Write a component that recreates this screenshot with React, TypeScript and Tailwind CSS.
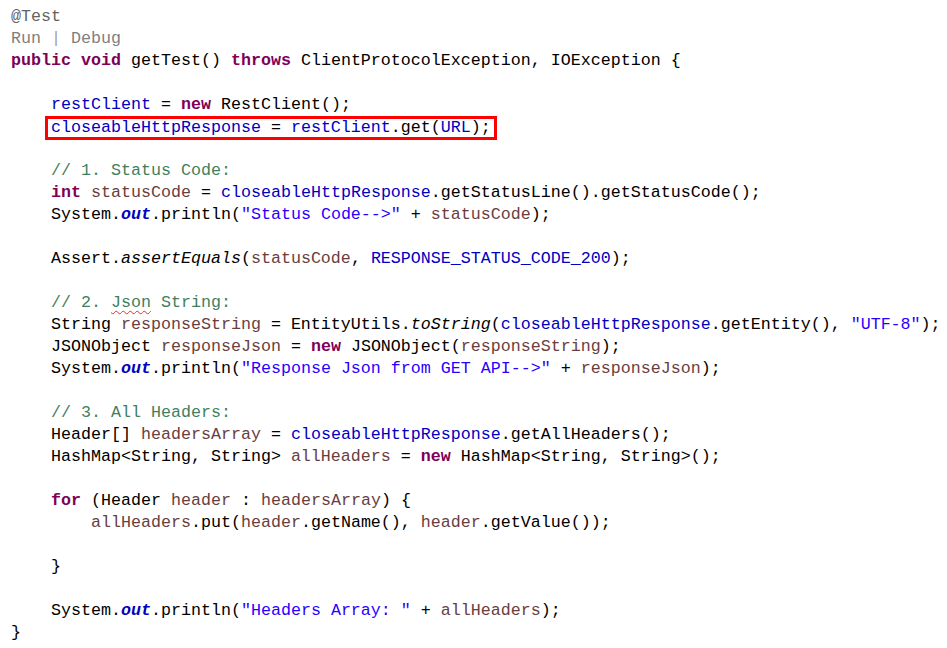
type Tok = [string, string?];

const K = 'font-bold text-[#7f0055]';
const F = 'text-[#0000c0]';
const S = 'text-[#2a00ff]';
const C = 'text-[#3f7f5f]';
const V = 'text-[#6a3e3e]';
const SF = 'font-bold italic text-[#0000c0]';
const SM = 'italic';

const lines: Tok[][] = [
  [['@Test', 'text-[#646464]']],
  [['Run', 'text-[#808080]'], [' | ', 'text-[#a0a0a0]'], ['Debug', 'text-[#808080]']],
  [['public', K], [' '], ['void', K], [' getTest() '], ['throws', K], [' ClientProtocolException, IOException {']],
  [],
  [['    '], ['restClient', F], [' = '], ['new', K], [' RestClient();']],
  [['    '], ['closeableHttpResponse', F], [' = '], ['restClient', F], ['.get('], ['URL', F], [');']],
  [],
  [['    '], ['// 1. Status Code:', C]],
  [['    '], ['int', K], [' '], ['statusCode', V], [' = '], ['closeableHttpResponse', F], ['.getStatusLine().getStatusCode();']],
  [['    System.'], ['out', SF], ['.println('], ['"Status Code-->"', S], [' + '], ['statusCode', V], [');']],
  [],
  [['    Assert.'], ['assertEquals', SM], ['('], ['statusCode', V], [', '], ['RESPONSE_STATUS_CODE_200', F], [');']],
  [],
  [['    '], ['// 2. ', C], ['Json', C + ' underline decoration-wavy decoration-[#e03030] decoration-1 underline-offset-[3px]'], [' String:', C]],
  [['    String '], ['responseString', V], [' = EntityUtils.'], ['toString', SM], ['('], ['closeableHttpResponse', F], ['.getEntity(), '], ['"UTF-8"', S], [');']],
  [['    JSONObject '], ['responseJson', V], [' = '], ['new', K], [' JSONObject('], ['responseString', V], [');']],
  [['    System.'], ['out', SF], ['.println('], ['"Response Json from GET API-->"', S], [' + '], ['responseJson', V], [');']],
  [],
  [['    '], ['// 3. All Headers:', C]],
  [['    Header[] '], ['headersArray', V], [' = '], ['closeableHttpResponse', F], ['.getAllHeaders();']],
  [['    HashMap<String, String> '], ['allHeaders', V], [' = '], ['new', K], [' HashMap<String, String>();']],
  [],
  [['    '], ['for', K], [' (Header '], ['header', V], [' : '], ['headersArray', V], [') {']],
  [['        '], ['allHeaders', V], ['.put('], ['header', V], ['.getName(), '], ['header', V], ['.getValue());']],
  [],
  [['    }']],
  [],
  [['    System.'], ['out', SF], ['.println('], ['"Headers Array: "', S], [' + '], ['allHeaders', V], [');']],
  [['}']],
];

export default function App() {
  return (
    <div className="w-[947px] h-[648px] bg-white overflow-hidden pt-[6px] pl-[11px] font-['Liberation_Mono',monospace] text-[16.67px] leading-[22px] text-black">
      {lines.map((line, i) => {
        const content = line.map(([t, cls], j) => (
          <span key={j} className={cls}>
            {t}
          </span>
        ));
        if (i === 5) {
          return (
            <div key={i} className="h-[22px] whitespace-pre">
              <span>    </span>
              <span className="inline-block -ml-[6px] px-[3px] border-[3px] border-[#ff0000] leading-[18px]">
                {content.slice(1)}
              </span>
            </div>
          );
        }
        return (
          <div key={i} className="h-[22px] whitespace-pre">
            {content}
          </div>
        );
      })}
    </div>
  );
}
